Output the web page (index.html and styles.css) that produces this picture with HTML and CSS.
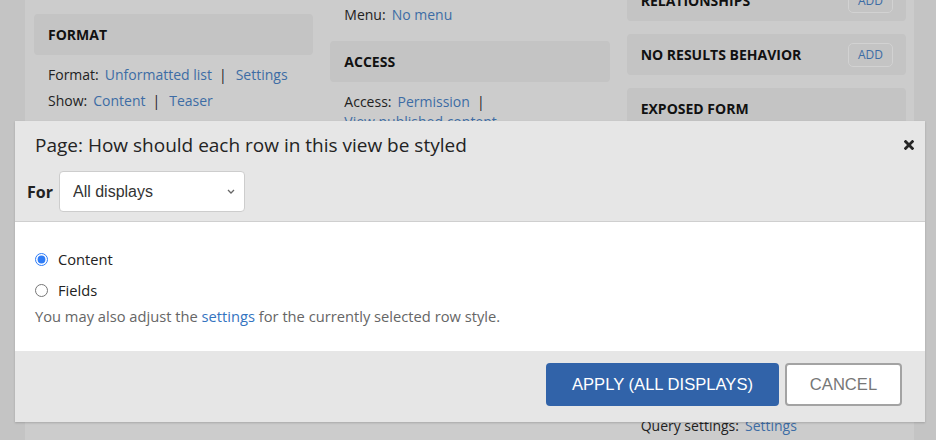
FILE: index.html
```html
<!DOCTYPE html>
<html lang="en">
<head>
  <meta charset="UTF-8">
  <meta name="viewport" content="width=device-width, initial-scale=1">
  <title>Views - Row style</title>
  <link rel="stylesheet" href="styles.css">
</head>
<body>

  <!-- Pagina de fondo (atenuada por el dialogo) -->
  <div class="page">
    <div class="columns">

      <div class="col col-1">
        <div class="section">
          <div class="section-head">Format</div>
          <div class="section-items">
            <div class="item"><span class="lbl">Format:</span><a href="#">Unformatted list</a><span class="sep">|</span><a href="#">Settings</a></div>
            <div class="item"><span class="lbl">Show:</span><a href="#">Content</a><span class="sep">|</span><a href="#">Teaser</a></div>
          </div>
        </div>
        <div class="section">
          <div class="section-head">Fields</div>
          <div class="section-items">
            <div class="item">The selected style or row format does not use fields.</div>
          </div>
        </div>
      </div>

      <div class="col col-2">
        <div class="section-items first">
          <div class="item"><span class="lbl">Menu:</span><a href="#">No menu</a></div>
        </div>
        <div class="section">
          <div class="section-head">Access</div>
          <div class="section-items">
            <div class="item"><span class="lbl">Access:</span><a href="#">Permission</a><span class="sep">|</span> <a href="#">View published content</a></div>
          </div>
        </div>
      </div>

      <div class="col col-3">
        <div class="section empty">
          <div class="section-head">Relationships <a class="add" href="#">Add</a></div>
        </div>
        <div class="section empty">
          <div class="section-head">No results behavior <a class="add" href="#">Add</a></div>
        </div>
        <div class="section">
          <div class="section-head">Exposed form</div>
          <div class="section-items">
            <div class="item"><span class="lbl">Exposed form in block:</span><a href="#">No</a></div>
            <div class="item"><span class="lbl">Exposed form style:</span><a href="#">Basic</a><span class="sep">|</span><a href="#">Settings</a></div>
          </div>
        </div>
        <div class="section other">
          <div class="section-head">Other</div>
          <div class="section-items">
            <div class="item"><span class="lbl">Machine Name:</span><a href="#">page_1</a></div>
            <div class="item"><span class="lbl">Administrative comment:</span><a href="#">None</a></div>
            <div class="item"><span class="lbl">Use AJAX:</span><a href="#">No</a></div>
            <div class="item"><span class="lbl">Hide attachments in summary:</span><a href="#">No</a></div>
            <div class="item"><span class="lbl">Contextual links:</span><a href="#">Shown</a></div>
            <div class="item"><span class="lbl">Use aggregation:</span><a href="#">No</a></div>
            <div class="item"><span class="lbl">Query settings:</span><a href="#">Settings</a></div>
          </div>
        </div>
      </div>

    </div>
  </div>

  <!-- Dialogo -->
  <div class="dialog">
    <div class="dialog-head">
      <div class="dialog-title-row">
        <h1 class="dialog-title">Page: How should each row in this view be styled</h1>
        <button class="dialog-close" type="button" aria-label="Close">
          <svg width="10" height="10" viewBox="0 0 10 10"><path d="M1.6 1.6 L8.4 8.4 M8.4 1.6 L1.6 8.4" stroke="#262626" stroke-width="2.8" stroke-linecap="square"/></svg>
        </button>
      </div>
      <div class="for-row">
        <label class="for-label" for="override">For</label>
        <div class="select-wrap">
          <select id="override">
            <option>All displays</option>
            <option>This page (override)</option>
          </select>
          <svg class="chevron" width="8" height="5" viewBox="0 0 8 5"><path d="M1 1 L4 4 L7 1" fill="none" stroke="#666" stroke-width="1.3"/></svg>
        </div>
      </div>
    </div>

    <div class="dialog-body">
      <div class="radios">
        <label class="radio-row"><input type="radio" name="row" checked> Content</label>
        <label class="radio-row"><input type="radio" name="row"> Fields</label>
      </div>
      <div class="description">You may also adjust the <a href="#">settings</a> for the currently selected row style.</div>
    </div>

    <div class="dialog-foot">
      <button class="btn btn-primary" type="button">Apply (all displays)</button>
      <button class="btn btn-cancel" type="button">Cancel</button>
    </div>
  </div>

</body>
</html>
```

FILE: styles.css
```css
body {
  margin: 0;
  background: #c4c4c4;
  font-family: 'Open Sans', sans-serif;
  font-size: 14px;
  color: #222;
  overflow: hidden;
  position: relative;
  height: 440px;
}

a {
  color: #3d6ca5;
  text-decoration: none;
}

/* Pagina de fondo */
.page {
  margin: 0 22px 0 25px;
  background: #cccccc;
  height: 440px;
}

.columns {
  display: grid;
  grid-template-columns: 1fr 1fr 1fr;
  gap: 17px;
  padding: 0 8px 0 9px;
}

.col-1 { padding-top: 14px; }
.col-2 { padding-top: 5px; }
.col-3 { margin-top: -20px; }

.section {
  margin-bottom: 10px;
}

.section.empty {
  margin-bottom: 13px;
}

.section.other {
  margin-top: 24px;
}

.section-head {
  display: flex;
  align-items: center;
  justify-content: space-between;
  height: 41px;
  padding: 0 13px 0 14px;
  background: #c4c4c4;
  border-radius: 4px;
  font-weight: 700;
  text-transform: uppercase;
  color: #111;
}

.add {
  font-weight: 400;
  font-size: 12px;
  padding: 0 9px;
  line-height: 22px;
  border: 1px solid #d2d2d2;
  border-radius: 5px;
  color: #3d6ca5;
}

.section-items {
  padding: 10px 14px 0;
}

.section-items.first {
  padding-top: 0;
  margin-bottom: 16px;
}

.item {
  line-height: 20px;
  margin-bottom: 6px;
}

.item a {
  white-space: nowrap;
}

.lbl {
  margin-right: 6px;
}

.sep {
  margin: 0 9px 0 7px;
}

/* Dialogo */
.dialog {
  position: absolute;
  left: 15px;
  top: 121px;
  width: 910px;
  background: #e6e6e6;
  box-shadow: 0 1px 2px rgba(0, 0, 0, 0.18);
}

.dialog-head {
  border-bottom: 1px solid #cfcfcf;
  padding-bottom: 9px;
}

.dialog-title-row {
  display: flex;
  align-items: center;
  justify-content: space-between;
  padding: 12px 11px 0 20px;
}

.dialog-title {
  margin: 0;
  font-size: 19px;
  font-weight: 400;
  line-height: 24px;
  color: #232323;
}

.dialog-close {
  border: none;
  background: none;
  padding: 0;
  width: 10px;
  height: 10px;
  display: flex;
  cursor: pointer;
}

.for-row {
  display: flex;
  align-items: center;
  gap: 6px;
  padding: 14px 0 0 12px;
}

.for-label {
  font-weight: 700;
  font-size: 16px;
  color: #222;
}

.select-wrap {
  position: relative;
  display: flex;
}

.select-wrap select {
  appearance: none;
  -webkit-appearance: none;
  width: 186px;
  height: 41px;
  padding: 0 24px 0 13px;
  border: 1px solid #cdcdcd;
  border-radius: 4px;
  background: #fff;
  font-family: 'Liberation Sans', Arial, sans-serif;
  font-size: 16px;
  color: #333;
}

.chevron {
  position: absolute;
  right: 10px;
  top: 18px;
  pointer-events: none;
}

.dialog-body {
  background: #fff;
  padding: 27px 20px 25px;
  font-size: 14.7px;
}

.radios {
  display: flex;
  flex-direction: column;
  gap: 11px;
}

.radio-row {
  display: flex;
  align-items: center;
  height: 20px;
  color: #222;
}

.radio-row input {
  margin: 0 10px 0 0;
  width: 13px;
  height: 13px;
  accent-color: #2f7cf6;
}

.description {
  margin-top: 6px;
  line-height: 20px;
  color: #666;
}

.description a {
  color: #3474bf;
}

.dialog-foot {
  display: flex;
  justify-content: flex-end;
  gap: 6px;
  padding: 12px 23px 16px 0;
}

.btn {
  height: 43px;
  border-radius: 4px;
  font-family: 'Liberation Sans', Arial, sans-serif;
  font-size: 16.6px;
  text-transform: uppercase;
  cursor: pointer;
}

.btn-primary {
  width: 233px;
  background: #3163a9;
  border: none;
  color: #fff;
}

.btn-cancel {
  width: 117px;
  background: #fff;
  border: 2px solid #a3a3a3;
  color: #777;
}
```
